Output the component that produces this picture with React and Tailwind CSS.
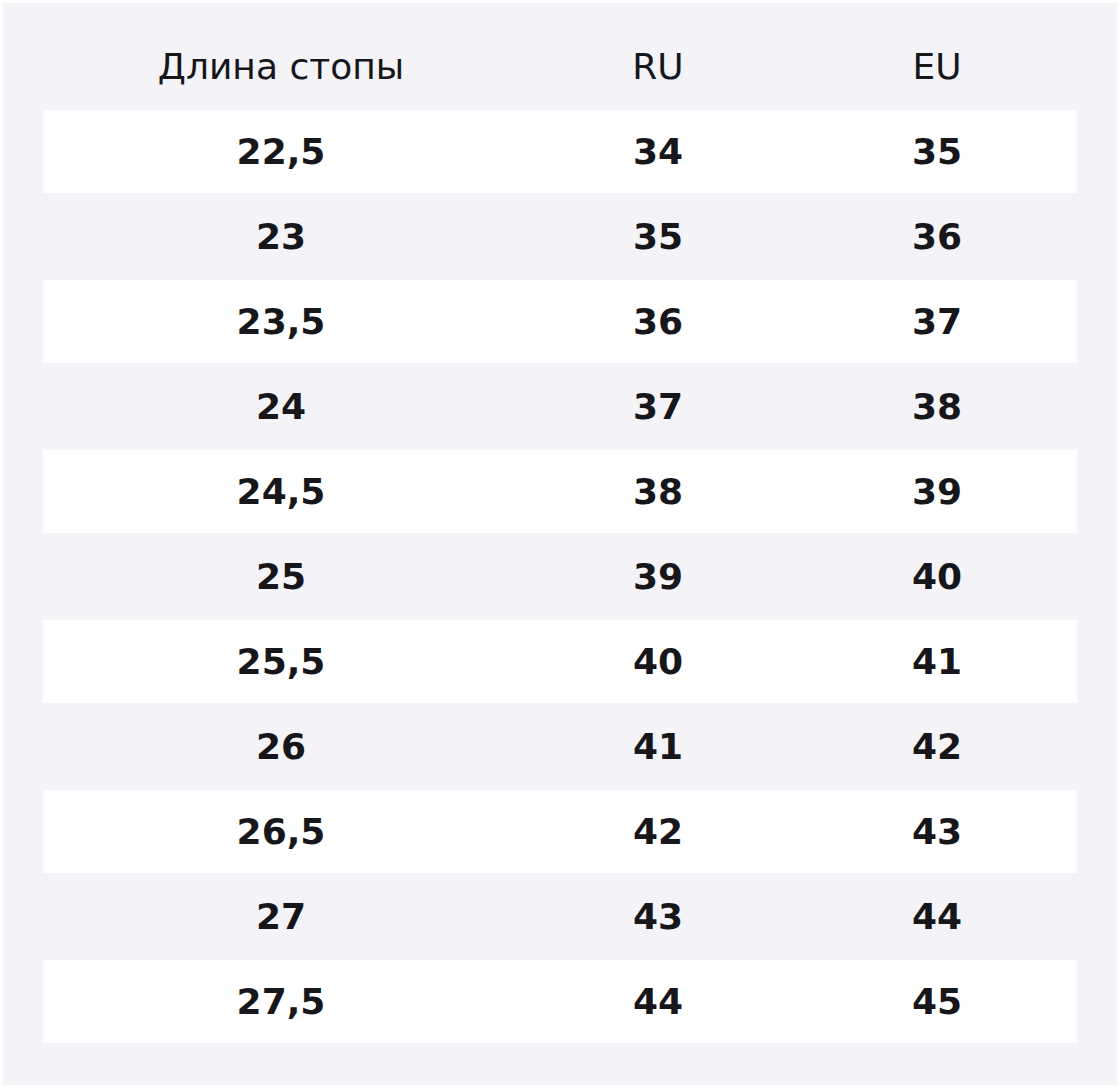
const rows = [
  ["22,5", "34", "35"],
  ["23", "35", "36"],
  ["23,5", "36", "37"],
  ["24", "37", "38"],
  ["24,5", "38", "39"],
  ["25", "39", "40"],
  ["25,5", "40", "41"],
  ["26", "41", "42"],
  ["26,5", "42", "43"],
  ["27", "43", "44"],
  ["27,5", "44", "45"],
];

export default function App() {
  return (
    <div className="bg-white p-[3px] font-['DejaVu_Sans',sans-serif] text-[#16161b]">
      <div className="bg-[#f3f3f8] pt-[20px] px-[40px] pb-[42px]">
        <div className="grid grid-cols-[476px_278px_280px] h-[87px] items-center text-center text-[36px] leading-none">
          <div>Длина стопы</div>
          <div>RU</div>
          <div>EU</div>
        </div>
        {rows.map((r, i) => (
          <div
            key={r[0]}
            className={
              i % 2 === 0
                ? "grid grid-cols-[476px_278px_280px] h-[83px] items-center text-center text-[36px] font-bold leading-none bg-white"
                : "grid grid-cols-[476px_278px_280px] h-[87px] items-center text-center text-[36px] font-bold leading-none"
            }
          >
            <div>{r[0]}</div>
            <div>{r[1]}</div>
            <div>{r[2]}</div>
          </div>
        ))}
      </div>
    </div>
  );
}
